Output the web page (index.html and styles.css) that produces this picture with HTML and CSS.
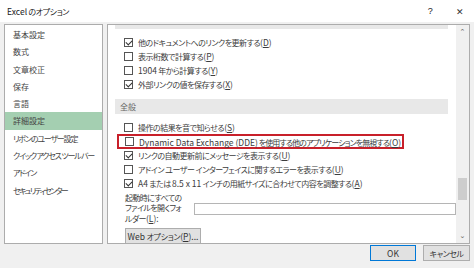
FILE: index.html
```html
<!DOCTYPE html>
<html lang="ja">
<head>
    <meta charset="UTF-8">
    <title>Excel のオプション</title>
    <link rel="stylesheet" href="styles.css">
</head>
<body>
    <div class="dialog">
        <div class="titlebar">
            <span class="title"><span class="lat">Excel</span> のオプション</span>
            <span class="help">?</span>
            <span class="close">✕</span>
        </div>
        <div class="main">
            <ul class="nav">
                <li>基本設定</li>
                <li>数式</li>
                <li>文章校正</li>
                <li>保存</li>
                <li>言語</li>
                <li class="selected">詳細設定</li>
                <li class="kana">リボンのユーザー設定</li>
                <li class="kana">クイック アクセス ツール バー</li>
                <li class="kana">アドイン</li>
                <li class="kana tight">セキュリティ センター</li>
            </ul>
            <div class="panel">
                <div class="content">
                    <div class="strip"></div>
                    <div class="group">
                        <label class="row"><span class="cb on"></span><span>他のドキュメントへのリンクを更新する<span class="lat">(<u>D</u>)</span></span></label>
                        <label class="row"><span class="cb"></span><span>表示桁数で計算する<span class="lat">(<u>P</u>)</span></span></label>
                        <label class="row"><span class="cb"></span><span><span class="lat">1904</span> 年から計算する<span class="lat">(<u>Y</u>)</span></span></label>
                        <label class="row"><span class="cb on"></span><span>外部リンクの値を保存する<span class="lat">(<u>X</u>)</span></span></label>
                    </div>
                    <div class="section">全般</div>
                    <div class="group">
                        <label class="row"><span class="cb"></span><span>操作の結果を音で知らせる<span class="lat">(<u>S</u>)</span></span></label>
                        <label class="row marked"><span class="cb"></span><span><span class="lat">Dynamic Data Exchange (DDE)</span> を使用する他のアプリケーションを無視する<span class="lat">(<u>O</u>)</span></span></label>
                        <label class="row"><span class="cb on"></span><span>リンクの自動更新前にメッセージを表示する<span class="lat">(<u>U</u>)</span></span></label>
                        <label class="row"><span class="cb"></span><span>アドイン ユーザー インターフェイスに関するエラーを表示する<span class="lat">(<u>U</u>)</span></span></label>
                        <label class="row"><span class="cb on"></span><span><span class="lat">A4</span> または <span class="lat">8.5 x 11</span> インチの用紙サイズに合わせて内容を調整する<span class="lat">(<u>A</u>)</span></span></label>
                    </div>
                    <div class="startup">
                        <span class="startup-label">起動時にすべての<br>ファイルを開くフォ<br>ルダー<span class="lat">(<u>L</u>):</span></span>
                        <span class="text-input"></span>
                    </div>
                    <button class="web-btn"><span class="lat">Web</span> オプション<span class="lat">(<u>P</u>)...</span></button>
                </div>
                <div class="scrollbar">
                    <span class="arrow">&#8963;</span>
                    <div class="track"><div class="thumb"></div></div>
                    <span class="arrow">&#8964;</span>
                </div>
            </div>
        </div>
        <div class="footer">
            <button class="btn default"><span class="lat">OK</span></button>
            <button class="btn">キャンセル</button>
        </div>
    </div>
</body>
</html>
```

FILE: styles.css
```css
* {
    box-sizing: border-box;
    margin: 0;
    padding: 0;
}

body {
    width: 474px;
    height: 268px;
    overflow: hidden;
    font-family: "Noto Sans CJK JP", "Noto Sans", sans-serif;
    font-feature-settings: "palt";
    font-size: 8px;
    color: #3c3c3c;
    background-color: #f0f0f0;
}

.lat {
    font-size: 8.5px;
    letter-spacing: 0;
}

.dialog {
    height: 268px;
    display: flex;
    flex-direction: column;
}

.titlebar {
    height: 22px;
    background-color: #fff;
    display: flex;
    align-items: center;
    padding: 0 10px 0 7px;
    font-size: 8px;
    color: #222;
    letter-spacing: -0.4px;
}

.title {
    flex: 1;
}

.help {
    margin-right: 24px;
    font-family: "Liberation Sans", sans-serif;
    font-size: 9px;
}

.close {
    font-size: 9px;
    color: #333;
}

.main {
    display: flex;
    gap: 4px;
    padding: 2px 4px 0 4px;
    height: 222px;
}

.nav {
    list-style: none;
    width: 99px;
    height: 220px;
    background: #fff;
    border: 1px solid #acacac;
    padding-top: 1px;
}

.nav li {
    height: 17.3px;
    line-height: 17.3px;
    padding-left: 8px;
    white-space: nowrap;
    color: #444;
}

.nav li.kana {
    letter-spacing: -1.2px;
}

.nav li.tight {
    letter-spacing: -1.7px;
}

.nav li.selected {
    background-color: #a4cfb1;
}

.panel {
    width: 363px;
    height: 220px;
    background: #fff;
    border: 1px solid #acacac;
    display: flex;
    overflow: hidden;
}

.content {
    flex: 1;
    overflow: hidden;
}

.strip {
    height: 4px;
    margin: 0 8px 0 7px;
    background-color: #e8e8e8;
}

.group {
    margin-top: 6px;
}

.row {
    display: flex;
    align-items: center;
    gap: 5px;
    height: 14px;
    padding-left: 16px;
    white-space: nowrap;
    letter-spacing: -0.5px;
}

.row.marked {
    margin-left: 9px;
    padding-left: 6px;
    width: 287px;
    height: 15px;
    border: 2px solid #c8202a;
    margin-bottom: -1px;
    letter-spacing: -0.9px;
}

.cb {
    position: relative;
    flex: none;
    width: 9px;
    height: 9px;
    border: 1px solid #555;
    background: #fff;
}

.cb.on::after {
    content: '';
    position: absolute;
    left: 2px;
    top: 0;
    width: 3px;
    height: 5px;
    border: solid #333;
    border-width: 0 1px 1px 0;
    transform: rotate(45deg);
}

.section {
    margin: 8px 8px 0 7px;
    height: 15px;
    line-height: 15px;
    padding-left: 5px;
    background-color: #e8e8e8;
    color: #666;
}

.startup {
    display: flex;
    align-items: center;
    gap: 8px;
    margin-top: 3px;
    padding-left: 17px;
}

.startup-label {
    width: 61px;
    line-height: 10px;
    white-space: nowrap;
    letter-spacing: -0.6px;
}

.text-input {
    width: 262px;
    height: 12px;
    border: 1px solid #b5b5b5;
    background: #fff;
}

.web-btn {
    display: block;
    margin: 4px 0 0 17px;
    width: 76px;
    height: 16px;
    font: inherit;
    letter-spacing: -0.3px;
    color: #333;
    background-color: #e1e1e1;
    border: 1px solid #adadad;
}

.scrollbar {
    width: 13px;
    background-color: #f0f0f0;
    display: flex;
    flex-direction: column;
    align-items: center;
}

.arrow {
    height: 14px;
    line-height: 14px;
    font-family: "DejaVu Sans", sans-serif;
    font-size: 7px;
    color: #606060;
}

.track {
    flex: 1;
    width: 100%;
    padding-top: 139px;
    display: flex;
    justify-content: center;
}

.thumb {
    width: 9px;
    height: 22px;
    background-color: #cdcdcd;
}

.footer {
    display: flex;
    justify-content: flex-end;
    gap: 7px;
    padding: 1px 4px 0 0;
}

.btn {
    height: 16px;
    width: 47px;
    font: inherit;
    letter-spacing: -0.5px;
    color: #333;
    background-color: #e1e1e1;
    border: 1px solid #adadad;
}

.btn.default {
    width: 46px;
    border-color: #0078d7;
}
```
